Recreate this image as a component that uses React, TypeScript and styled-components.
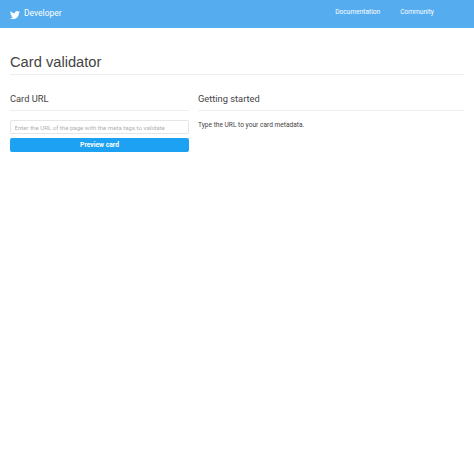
import React from "react";
import styled, { createGlobalStyle } from "styled-components";

const GlobalStyle = createGlobalStyle`
  html, body {
    margin: 0;
    padding: 0;
    background: #fff;
    font-family: Roboto, "Liberation Sans", sans-serif;
    color: #444;
  }
  * {
    box-sizing: border-box;
  }
`;

const TopBar = styled.header`
  height: 28px;
  background: #55acee;
  display: flex;
  justify-content: space-between;
  padding: 0 40px 0 10px;
  color: #fff;
`;

const Brand = styled.a`
  display: flex;
  align-items: center;
  gap: 4px;
  font-size: 8.5px;
  padding-bottom: 2px;
`;

const BirdIcon = styled.svg`
  width: 10px;
  height: 10px;
  fill: #fff;
  margin-top: 3px;
`;

const Nav = styled.nav`
  display: flex;
  gap: 20px;
  padding-top: 7px;
  font-size: 6.6px;
  line-height: 10px;
`;

const Main = styled.main`
  padding: 0 10px;
`;

const PageTitle = styled.h1`
  margin: 0;
  padding: 25px 0 2px;
  height: 47px;
  border-bottom: 1px solid #eee;
  font-family: "Liberation Sans", Arial, sans-serif;
  font-weight: 400;
  font-size: 14.7px;
  line-height: 19px;
`;

const Columns = styled.div`
  display: grid;
  grid-template-columns: 179px 266px;
  gap: 9px;
  padding-top: 19px;
`;

const SectionTitle = styled.h2`
  margin: 0 0 9px;
  height: 17px;
  border-bottom: 1px solid #eee;
  font-weight: 400;
  font-size: 9.3px;
  line-height: 10px;
`;

const UrlInput = styled.input`
  display: block;
  width: 100%;
  height: 14px;
  margin-bottom: 4px;
  padding: 0 3.5px;
  border: 1px solid #e6e6e6;
  border-radius: 2px;
  outline: none;
  font-family: inherit;
  font-size: 6.1px;

  &::placeholder {
    color: #b0b0b0;
    opacity: 1;
  }
`;

const PreviewButton = styled.button`
  display: block;
  width: 100%;
  height: 14px;
  padding: 0;
  border: 0;
  border-radius: 2px;
  background: #1da1f2;
  color: #fff;
  font-family: inherit;
  font-weight: 700;
  font-size: 6.7px;
`;

const BodyText = styled.p`
  margin: 0;
  font-size: 6.6px;
  line-height: 10px;
`;

export default function App() {
  return (
    <>
      <GlobalStyle />
      <TopBar>
        <Brand>
          <BirdIcon viewBox="0 0 24 24">
            <path d="M23.95 4.57a10 10 0 0 1-2.83.78 4.94 4.94 0 0 0 2.17-2.72c-.95.56-2 .96-3.13 1.19a4.92 4.92 0 0 0-8.38 4.48A13.98 13.98 0 0 1 1.67 3.16a4.92 4.92 0 0 0 1.52 6.57 4.9 4.9 0 0 1-2.23-.61v.06a4.92 4.92 0 0 0 3.95 4.83 4.99 4.99 0 0 1-2.21.08 4.94 4.94 0 0 0 4.6 3.42A9.87 9.87 0 0 1 0 19.54a13.94 13.94 0 0 0 7.55 2.21c9.06 0 14-7.5 14-13.98 0-.21 0-.42-.02-.63a9.94 9.94 0 0 0 2.46-2.55z" />
          </BirdIcon>
          Developer
        </Brand>
        <Nav>
          <span>Documentation</span>
          <span>Community</span>
        </Nav>
      </TopBar>
      <Main>
        <PageTitle>Card validator</PageTitle>
        <Columns>
          <section>
            <SectionTitle>Card URL</SectionTitle>
            <UrlInput placeholder="Enter the URL of the page with the meta tags to validate" />
            <PreviewButton>Preview card</PreviewButton>
          </section>
          <section>
            <SectionTitle>Getting started</SectionTitle>
            <BodyText>Type the URL to your card metadata.</BodyText>
          </section>
        </Columns>
      </Main>
    </>
  );
}
